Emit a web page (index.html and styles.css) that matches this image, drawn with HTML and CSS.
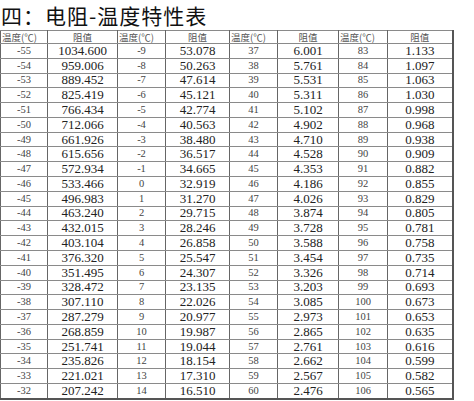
FILE: index.html
```html
<!DOCTYPE html>
<html lang="zh">
<head>
<meta charset="utf-8">
<title>电阻-温度特性表</title>
<link rel="stylesheet" href="styles.css">
</head>
<body>
<h1 class="title">四：电阻-温度特性表</h1>
<table class="rt">
<colgroup>
<col class="c1"><col class="c2"><col class="c3"><col class="c4"><col class="c5"><col class="c6"><col class="c7"><col class="c8">
</colgroup>
<thead>
<tr><th class="ht">温度(℃)</th><th class="hv">阻值</th><th class="ht">温度(℃)</th><th class="hv">阻值</th><th class="ht">温度(℃)</th><th class="hv">阻值</th><th class="ht">温度(℃)</th><th class="hv">阻值</th></tr>
</thead>
<tbody>
<tr><td class="t">-55</td><td>1034.600</td><td class="t">-9</td><td>53.078</td><td class="t">37</td><td>6.001</td><td class="t">83</td><td>1.133</td></tr>
<tr><td class="t">-54</td><td>959.006</td><td class="t">-8</td><td>50.263</td><td class="t">38</td><td>5.761</td><td class="t">84</td><td>1.097</td></tr>
<tr><td class="t">-53</td><td>889.452</td><td class="t">-7</td><td>47.614</td><td class="t">39</td><td>5.531</td><td class="t">85</td><td>1.063</td></tr>
<tr><td class="t">-52</td><td>825.419</td><td class="t">-6</td><td>45.121</td><td class="t">40</td><td>5.311</td><td class="t">86</td><td>1.030</td></tr>
<tr><td class="t">-51</td><td>766.434</td><td class="t">-5</td><td>42.774</td><td class="t">41</td><td>5.102</td><td class="t">87</td><td>0.998</td></tr>
<tr><td class="t">-50</td><td>712.066</td><td class="t">-4</td><td>40.563</td><td class="t">42</td><td>4.902</td><td class="t">88</td><td>0.968</td></tr>
<tr><td class="t">-49</td><td>661.926</td><td class="t">-3</td><td>38.480</td><td class="t">43</td><td>4.710</td><td class="t">89</td><td>0.938</td></tr>
<tr><td class="t">-48</td><td>615.656</td><td class="t">-2</td><td>36.517</td><td class="t">44</td><td>4.528</td><td class="t">90</td><td>0.909</td></tr>
<tr><td class="t">-47</td><td>572.934</td><td class="t">-1</td><td>34.665</td><td class="t">45</td><td>4.353</td><td class="t">91</td><td>0.882</td></tr>
<tr><td class="t">-46</td><td>533.466</td><td class="t">0</td><td>32.919</td><td class="t">46</td><td>4.186</td><td class="t">92</td><td>0.855</td></tr>
<tr><td class="t">-45</td><td>496.983</td><td class="t">1</td><td>31.270</td><td class="t">47</td><td>4.026</td><td class="t">93</td><td>0.829</td></tr>
<tr><td class="t">-44</td><td>463.240</td><td class="t">2</td><td>29.715</td><td class="t">48</td><td>3.874</td><td class="t">94</td><td>0.805</td></tr>
<tr><td class="t">-43</td><td>432.015</td><td class="t">3</td><td>28.246</td><td class="t">49</td><td>3.728</td><td class="t">95</td><td>0.781</td></tr>
<tr><td class="t">-42</td><td>403.104</td><td class="t">4</td><td>26.858</td><td class="t">50</td><td>3.588</td><td class="t">96</td><td>0.758</td></tr>
<tr><td class="t">-41</td><td>376.320</td><td class="t">5</td><td>25.547</td><td class="t">51</td><td>3.454</td><td class="t">97</td><td>0.735</td></tr>
<tr><td class="t">-40</td><td>351.495</td><td class="t">6</td><td>24.307</td><td class="t">52</td><td>3.326</td><td class="t">98</td><td>0.714</td></tr>
<tr><td class="t">-39</td><td>328.472</td><td class="t">7</td><td>23.135</td><td class="t">53</td><td>3.203</td><td class="t">99</td><td>0.693</td></tr>
<tr><td class="t">-38</td><td>307.110</td><td class="t">8</td><td>22.026</td><td class="t">54</td><td>3.085</td><td class="t">100</td><td>0.673</td></tr>
<tr><td class="t">-37</td><td>287.279</td><td class="t">9</td><td>20.977</td><td class="t">55</td><td>2.973</td><td class="t">101</td><td>0.653</td></tr>
<tr><td class="t">-36</td><td>268.859</td><td class="t">10</td><td>19.987</td><td class="t">56</td><td>2.865</td><td class="t">102</td><td>0.635</td></tr>
<tr><td class="t">-35</td><td>251.741</td><td class="t">11</td><td>19.044</td><td class="t">57</td><td>2.761</td><td class="t">103</td><td>0.616</td></tr>
<tr><td class="t">-34</td><td>235.826</td><td class="t">12</td><td>18.154</td><td class="t">58</td><td>2.662</td><td class="t">104</td><td>0.599</td></tr>
<tr><td class="t">-33</td><td>221.021</td><td class="t">13</td><td>17.310</td><td class="t">59</td><td>2.567</td><td class="t">105</td><td>0.582</td></tr>
<tr><td class="t">-32</td><td>207.242</td><td class="t">14</td><td>16.510</td><td class="t">60</td><td>2.476</td><td class="t">106</td><td>0.565</td></tr>
</tbody>
</table>
</body>
</html>
```
FILE: styles.css
```css
html, body {
  margin: 0;
  padding: 0;
  background: #fff;
}
.title {
  margin: 0;
  padding-left: 1px;
  font-family: "Noto Sans CJK SC", sans-serif;
  font-weight: 400;
  font-size: 21px;
  letter-spacing: 1px;
  line-height: 30px;
  color: #111;
  white-space: nowrap;
}
.rt {
  border-collapse: collapse;
  table-layout: fixed;
  width: 453px;
  height: 370px;
  border: 1px solid #555;
  border-right-width: 2px;
  border-bottom-width: 2px;
}
.c1 { width: 47px; }
.c2 { width: 70px; }
.c3 { width: 48px; }
.c4 { width: 64px; }
.c5 { width: 48px; }
.c6 { width: 61px; }
.c7 { width: 49px; }
.c8 { width: 65px; }
.rt th, .rt td {
  padding: 0;
  line-height: 12px;
  border-left: 1px solid #666;
  border-right: 1px solid #666;
  border-top: 1px solid #8a8a8a;
  border-bottom: 1px solid #8a8a8a;
  text-align: center;
  white-space: nowrap;
  overflow: hidden;
}
.rt th {
  font-family: "Noto Sans CJK SC", sans-serif;
  font-weight: 400;
  font-size: 9.5px;
  color: #555;
}
.rt th.ht {
  text-align: left;
  padding-left: 1px;
}
.rt td {
  font-family: "Liberation Serif", "Times New Roman", serif;
  font-size: 13px;
  color: #222;
}
.rt td.t {
  font-size: 10.5px;
  color: #444;
}
```
